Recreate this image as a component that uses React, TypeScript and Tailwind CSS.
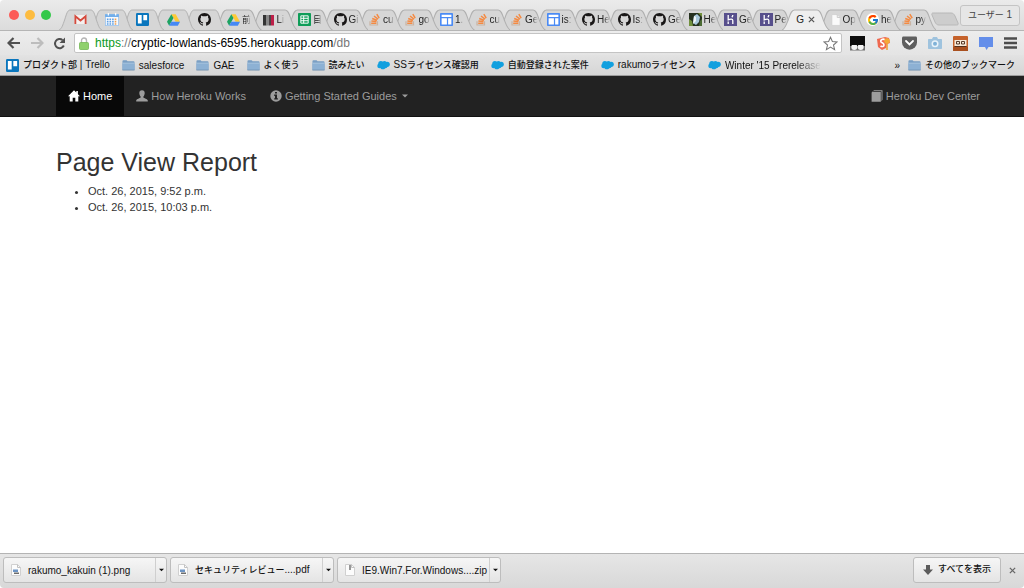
import type { ReactNode } from "react";
import { FcGoogle } from "react-icons/fc";

type IconProps = { className?: string };

function GithubIcon() {
  return (
    <svg viewBox="0 0 16 16" className="size-[13px] shrink-0" fill="#191717">
      <path d="M8 0C3.58 0 0 3.58 0 8c0 3.54 2.29 6.53 5.47 7.59.4.07.55-.17.55-.38 0-.19-.01-.82-.01-1.49-2.01.37-2.53-.49-2.69-.94-.09-.23-.48-.94-.82-1.13-.28-.15-.68-.52-.01-.53.63-.01 1.08.58 1.23.82.72 1.21 1.87.87 2.33.66.07-.52.28-.87.51-1.07-1.78-.2-3.64-.89-3.64-3.95 0-.87.31-1.59.82-2.15-.08-.2-.36-1.02.08-2.12 0 0 .67-.21 2.2.82.64-.18 1.32-.27 2-.27.68 0 1.36.09 2 .27 1.53-1.04 2.2-.82 2.2-.82.44 1.1.16 1.92.08 2.12.51.56.82 1.27.82 2.15 0 3.07-1.87 3.75-3.65 3.95.29.25.54.73.54 1.48 0 1.07-.01 1.93-.01 2.2 0 .21.15.46.55.38A8.01 8.01 0 0 0 16 8c0-4.42-3.58-8-8-8z" />
    </svg>
  );
}

function GmailIcon() {
  return (
    <svg viewBox="0 0 16 16" className="size-[13px]">
      <rect x="1" y="2.500" width="14" height="11" rx="1" fill="#f4f0ef" />
      <path d="M1.700 13.500V4l6.300 5.200L14.300 4v9.500" fill="none" stroke="#d54a3d" strokeWidth="2.200" />
    </svg>
  );
}

function CalendarIcon() {
  const days = [3.2, 6.4, 9.6, 12.8];
  return (
    <svg viewBox="0 0 17 16" className="h-[13px] w-[14px]">
      <rect x="0.500" y="2" width="16" height="13.500" fill="#f7fafe" stroke="#9cc4ee" />
      <path d="M0 1.500h17V5H0z" fill="#72aeea" />
      <path d="M4 0v3M13 0v3" stroke="#fff" strokeWidth="1.500" />
      {days.map((x) => <path key={x} d={`M${x} 6.700v2M${x} 9.600v2M${x} 12.500v2`} stroke={x === 12.8 ? "#f0a050" : "#5f9fe3"} strokeWidth="2" />)}
    </svg>
  );
}

function TrelloIcon() {
  return (
    <svg viewBox="0 0 16 16" className="size-[13px] shrink-0">
      <rect width="16" height="16" rx="1.500" fill="#0a76bd" />
      <path d="M2.300 2.500h4.700v10.500H2.300zM9 2.500h4.700v6.500H9z" fill="#fff" />
    </svg>
  );
}

function DriveIcon() {
  return (
    <svg viewBox="0 0 18 16" className="h-[12px] w-[13px] shrink-0">
      <path d="M6 0h6l6 10.500h-6z" fill="#fdc934" />
      <path d="M6 0l3 5.200L3 16 0 10.500z" fill="#1da362" />
      <path d="M6 10.500h12L15 16H3z" fill="#4688f4" />
    </svg>
  );
}

function SheetsIcon() {
  return (
    <svg viewBox="0 0 16 16" className="size-[13px] shrink-0">
      <rect width="16" height="16" rx="1" fill="#0f9d58" />
      <path d="M3.500 3.500h9v9h-9zM3.500 6.500h9M3.500 9.500h9M7 3.500v9" fill="none" stroke="#fff" strokeWidth="1.200" />
    </svg>
  );
}

function SitesIcon() {
  return (
    <svg viewBox="0 0 16 16" className="size-[13px] shrink-0">
      <rect width="16" height="16" rx="1" fill="#4a8af4" />
      <path d="M2 2h12v3H2zM2 6.500h6.500V14H2zM10 6.500h4V14h-4z" fill="#fff" />
    </svg>
  );
}

function StripesIcon() {
  return (
    <svg viewBox="0 0 12 12" className="size-[12px] shrink-0">
      <path d="M0 1h3.500v10.500H0z" fill="#333" />
      <path d="M3.500 1H6v10.500H3.500z" fill="#888" />
      <path d="M6 1h2v10.500H6z" fill="#4b4346" />
      <path d="M8 1h3v10.500H8z" fill="#bd1f48" />
    </svg>
  );
}

function PhotoIcon() {
  return (
    <svg viewBox="0 0 13 13" className="size-[13px] shrink-0">
      <rect width="13" height="13" fill="#25301f" />
      <path d="M0 6l3 2 1 5H0zM9 0h4v4z" fill="#71903c" />
      <path d="M5 3l3-2 3 3-1 5-3 3-3-2z" fill="#a9c9dc" />
      <path d="M5 3l2 1v4l-3 3z" fill="#f0f5f7" />
      <path d="M11 8l2-2v7h-3z" fill="#4b6b34" />
    </svg>
  );
}

function HerokuIcon() {
  return (
    <svg viewBox="0 0 13 13" className="size-[13px] shrink-0">
      <rect width="13" height="13" fill="#574f8c" />
      <path d="M4.200 2v4.800c2-.9 4.600-1.200 4.600.6V11M8.800 2c0 1-.4 1.700-1 2.300M4.200 8.500V11" fill="none" stroke="#fff" strokeWidth="1.300" />
    </svg>
  );
}

function PageIcon() {
  return (
    <svg viewBox="0 0 12 14" className="h-[12px] w-[10px] shrink-0">
      <path d="M1 .5h6.500L11 4v9.500H1z" fill="#fafafa" stroke="#cfcfcf" />
      <path d="M7.500.5V4H11" fill="none" stroke="#c4c4c4" />
    </svg>
  );
}

function StackIcon() {
  return (
    <svg viewBox="0 0 12 13" className="h-[13px] w-[12px] shrink-0" fill="none">
      <path d="M1 8.200v3.800h7.500V8.200" stroke="#c9b3a2" strokeWidth="1.200" />
      <path d="M2.200 10.300h5.200M2.400 8l5.100.6M3.200 5.500l4.800 1.800M5 3l4 3.100M7.800 1.200l2.400 4" stroke="#f48a42" strokeWidth="1.500" />
    </svg>
  );
}

function GoogleIcon() {
  return (
    <span className="flex size-[13px] shrink-0 items-center justify-center rounded-full bg-white">
      <FcGoogle className="size-[12px]" />
    </span>
  );
}

function FolderIcon() {
  return (
    <svg viewBox="0 0 14 12" className="h-[12px] w-[13px] shrink-0">
      <path d="M.5 2c0-.8.4-1.200 1-1.200h3.500l1 1.200h6.500c.6 0 1 .4 1 1V11.500H.5z" fill="#7a9fc4" />
      <path d="M.5 4h13v7.500H.5z" fill="#8db1d4" />
      <path d="M.5 4h13" stroke="#b8d0e6" strokeWidth=".8" />
      <path d="M.5 11.500h13" stroke="#6585a6" strokeWidth=".8" />
    </svg>
  );
}

function CloudIcon() {
  return (
    <svg viewBox="0 0 14 10" className="h-[10px] w-[13px] shrink-0" fill="#12a0df">
      <circle cx="4.200" cy="3.400" r="2.800" />
      <circle cx="8" cy="3" r="2.400" />
      <circle cx="11" cy="4.300" r="2.800" />
      <circle cx="2.800" cy="6" r="2.500" />
      <circle cx="6.300" cy="6.800" r="2.800" />
      <circle cx="9" cy="6.200" r="2.400" />
    </svg>
  );
}

// Japanese runs are set one size below the Latin text around them.
function Label({ text }: { text: string }) {
  return (
    <>
      {text.split(/([^\x00-\x7f]+)/).map((part, index) => (index % 2 === 1 ? <span className="text-[9px]" key={index}>{part}</span> : part))}
    </>
  );
}

type TabInfo = { icon?: ReactNode; title?: string; name: string; active?: boolean };

const pinnedTabs: TabInfo[] = [
  { icon: <GmailIcon />, name: "Gmail" },
  { icon: <CalendarIcon />, name: "Calendar" },
  { icon: <TrelloIcon />, name: "Trello" },
  { icon: <DriveIcon />, name: "Drive" },
  { icon: <GithubIcon />, name: "GitHub" },
];

const tabs: TabInfo[] = [
  { icon: <DriveIcon />, title: "前", name: "Drive" },
  { icon: <StripesIcon />, title: "Li", name: "List" },
  { icon: <SheetsIcon />, title: "目", name: "Sheets" },
  { icon: <GithubIcon />, title: "Gi", name: "GitHub" },
  { icon: <StackIcon />, title: "cu", name: "Stack Overflow" },
  { icon: <StackIcon />, title: "go", name: "Stack Overflow" },
  { icon: <SitesIcon />, title: "1.", name: "Sites" },
  { icon: <StackIcon />, title: "cu", name: "Stack Overflow" },
  { icon: <StackIcon />, title: "Ge", name: "Stack Overflow" },
  { icon: <SitesIcon />, title: "is:", name: "Sites" },
  { icon: <GithubIcon />, title: "He", name: "GitHub" },
  { icon: <GithubIcon />, title: "Is:", name: "GitHub" },
  { icon: <GithubIcon />, title: "Ge", name: "GitHub" },
  { icon: <PhotoIcon />, title: "He", name: "Blog" },
  { icon: <HerokuIcon />, title: "Ge", name: "Heroku" },
  { icon: <HerokuIcon />, title: "Pe", name: "Heroku" },
  { title: "G", name: "Getting Started", active: true },
  { icon: <PageIcon />, title: "Op", name: "Page" },
  { icon: <GoogleIcon />, title: "he", name: "Google" },
  { icon: <StackIcon />, title: "py", name: "Stack Overflow" },
];

function Tab({ tab, order, pinned }: { tab: TabInfo; order: number; pinned?: boolean }) {
  return (
    <li className={pinned ? "relative flex w-[31px] shrink-0" : "relative flex min-w-0 flex-1"} style={{ zIndex: tab.active ? 50 : order }}>
      <svg viewBox="0 0 46 21" preserveAspectRatio="none" className="absolute inset-y-0 -left-[6px] h-full w-[calc(100%+12px)]">
        <path d="M0 21C3 20 4 16 6 11 8 5 9 1 12 1H34C37 1 38 5 40 11 42 16 43 20 46 21z" fill={tab.active ? "#eeeeee" : "#d6d6d6"} />
        <path d="M0 21C3 20 4 16 6 11 8 5 9 1 12 1H34C37 1 38 5 40 11 42 16 43 20 46 21" fill="none" stroke="#b0b0b0" strokeWidth="1" />
      </svg>
      {tab.active ? (
        <div className="relative flex w-full items-center justify-center gap-1">
          <span>{tab.title}</span>
          <button aria-label="Close tab">
            <svg viewBox="0 0 8 8" className="size-[7px]"><path d="M1 1l6 6M7 1L1 7" stroke="#555" strokeWidth="1.400" /></svg>
          </button>
        </div>
      ) : (
        <button aria-label={tab.name} className={pinned ? "relative flex w-full items-center justify-center" : "relative flex w-full items-center gap-[2px] pl-[7px]"}>
          {tab.icon}
          {!pinned && <span className="whitespace-nowrap text-left [mask-image:linear-gradient(to_right,black_50%,transparent)]"><Label text={tab.title ?? ""} /></span>}
        </button>
      )}
    </li>
  );
}

function TabStrip() {
  return (
    <div className="flex h-[30px] items-end bg-linear-to-b from-[#ebebeb] to-[#dcdcdc]">
      <div className="flex w-[65px] shrink-0 gap-[6px] self-center pl-[9px]">
        <button aria-label="Close" className="size-[10px] rounded-full bg-[#fc5b57]" />
        <button aria-label="Minimize" className="size-[10px] rounded-full bg-[#fdbc40]" />
        <button aria-label="Zoom" className="size-[10px] rounded-full bg-[#34c84a]" />
      </div>
      <ul className="relative isolate flex h-[21px] min-w-0 flex-1 text-[10px] text-[#222]">
        {pinnedTabs.map((tab, index) => <Tab key={index} tab={tab} order={40 - index} pinned />)}
        {tabs.map((tab, index) => <Tab key={index} tab={tab} order={30 - index} />)}
      </ul>
      <button aria-label="New tab" className="mb-[4px] h-[14px] w-[30px] shrink-0">
        <svg viewBox="0 0 30 14" className="h-[14px] w-[30px]">
          <path d="M3 1h18c2 0 3 1 4 3l3 7c.500 1.500 0 2-1.500 2H9C7 13 6 12 5 10L2 3c-.500-1.300 0-2 1-2z" fill="#cdcdcd" stroke="#b8b8b8" />
        </svg>
      </button>
      <button className="mr-1 h-[21px] w-[60px] shrink-0 self-center rounded-[3px] border border-[#c4c4c4] bg-[#e6e6e6] text-[10px] text-[#444]"><Label text="ユーザー 1" /></button>
    </div>
  );
}

function Extensions() {
  return (
    <div className="flex shrink-0 items-center gap-[11px] pr-[7px] pl-[8px]">
      <button aria-label="Panda">
        <svg viewBox="0 0 15 15" className="size-[15px]">
          <path d="M0 0h15v11H0z" fill="#0c0c0c" />
          <path d="M0 10h15v4.500H0z" fill="#6e6e6e" />
          <circle cx="4.300" cy="11" r="3" fill="#f4f4f4" />
          <circle cx="10.700" cy="11" r="3" fill="#f4f4f4" />
          <path d="M0 0h15v9H0z" fill="#0c0c0c" />
        </svg>
      </button>
      <button aria-label="Stylish">
        <svg viewBox="0 0 15 15" className="size-[15px]">
          <path d="M1 3l8-2 4 1 1 5-3 1-1 4-4 2-4-3z" fill="#ef6950" />
          <path d="M9 4C7 2 4 4 5 6c1 1 3 1 3 3 0 1.500-2 2-3.500 1" fill="none" stroke="#fff" strokeWidth="1.600" />
          <circle cx="11" cy="5" r="2.800" fill="#f4a937" />
          <path d="M11 7v7" stroke="#f0a03a" strokeWidth="1.600" />
        </svg>
      </button>
      <button aria-label="Pocket">
        <svg viewBox="0 0 15 14" className="h-[14px] w-[15px]">
          <path d="M1.500.5h12c1 0 1.500.6 1.500 1.500v4.500a7.500 7.200 0 0 1-15 0V2C0 1.100.6.500 1.500.5z" fill="#5f5f5f" />
          <path d="M4 5l3.500 3.500L11 5" fill="none" stroke="#fff" strokeWidth="1.800" strokeLinecap="round" />
        </svg>
      </button>
      <button aria-label="Capture">
        <svg viewBox="0 0 14 14" className="h-[14px] w-[14px]">
          <path d="M1 3h3l1-2h4l1 2h3c.600 0 1 .4 1 1v8c0 .6-.4 1-1 1H1c-.6 0-1-.4-1-1V4c0-.6.400-1 1-1z" fill="#9fc3de" />
          <circle cx="7" cy="7.800" r="3.500" fill="#e9f3fa" />
          <circle cx="7" cy="7.800" r="2" fill="#7fb2d8" />
        </svg>
      </button>
      <button aria-label="Reader">
        <svg viewBox="0 0 15 15" className="size-[15px]">
          <rect width="15" height="15" rx="1" fill="#c5622b" />
          <path d="M0 11h15v4H0z" fill="#a9501f" />
          <path d="M1.500 4h12v6h-12z" fill="#f6ead9" />
          <path d="M3.500 5.500h3V8h-3zM8.500 5.500h3V8h-3zM1.500 10.500h12" fill="none" stroke="#4a2a1a" strokeWidth=".9" />
        </svg>
      </button>
      <button aria-label="Chat">
        <svg viewBox="0 0 14 13" className="h-[13px] w-[14px]"><path d="M0 0h14v10H9.500L7.500 13 6 10H0z" fill="#648eea" /></svg>
      </button>
      <button aria-label="Menu">
        <svg viewBox="0 0 13 12" className="h-[12px] w-[13px]"><path d="M0 1.500h13M0 6h13M0 10.500h13" stroke="#4d4d4d" strokeWidth="2.400" /></svg>
      </button>
    </div>
  );
}

function Toolbar() {
  return (
    <div className="flex h-[25px] items-center border-t border-[#b5b5b5] bg-linear-to-b from-[#ededed] to-[#e4e4e4]">
      <div className="flex w-[74px] shrink-0 items-center gap-[9px] pl-[7px]">
        <button aria-label="Back">
          <svg viewBox="0 0 14 12" className="h-[12px] w-[14px]"><path d="M13 6H2M6.500 1L1.500 6l5 5" fill="none" stroke="#505050" strokeWidth="2.200" /></svg>
        </button>
        <button aria-label="Forward">
          <svg viewBox="0 0 14 12" className="h-[12px] w-[14px]"><path d="M1 6h11M7.500 1l5 5-5 5" fill="none" stroke="#bdbdbd" strokeWidth="2.200" /></svg>
        </button>
        <button aria-label="Reload">
          <svg viewBox="0 0 13 13" className="size-[13px]">
            <path d="M10.800 8.500A4.600 4.600 0 1 1 9.500 3" fill="none" stroke="#505050" strokeWidth="2" />
            <path d="M12 .5V6H6.500z" fill="#505050" />
          </svg>
        </button>
      </div>
      <div className="flex h-[20px] min-w-0 flex-1 items-center rounded-[2px] border border-[#c4c4c4] bg-white pr-[3px] pl-[4px]">
        <svg viewBox="0 0 10 13" className="h-[13px] w-[10px] shrink-0">
          <path d="M2.500 6V3.500a2.500 2.500 0 0 1 5 0V6" fill="none" stroke="#b5b5b5" strokeWidth="1.400" />
          <rect x=".5" y="5.500" width="9" height="7" rx="1" fill="#8fd06d" stroke="#74b755" strokeWidth=".8" />
        </svg>
        <span className="flex-1 truncate pl-[6px] text-[12px] text-[#777]"><span className="text-[#0b9a1c]">https</span>://<span className="text-black">cryptic-lowlands-6595.herokuapp.com</span>/db</span>
        <button aria-label="Bookmark this page">
          <svg viewBox="0 0 16 16" className="size-[15px]"><path d="M8 1.300l2 4.600 5 .4-3.800 3.300 1.200 4.900L8 11.900l-4.400 2.600 1.200-4.900L1 6.300l5-.4z" fill="#fff" stroke="#777" strokeWidth="1.100" /></svg>
        </button>
      </div>
      <Extensions />
    </div>
  );
}

const bookmarks: { icon: ReactNode; title: string }[] = [
  { icon: <TrelloIcon />, title: "プロダクト部 | Trello" },
  { icon: <FolderIcon />, title: "salesforce" },
  { icon: <FolderIcon />, title: "GAE" },
  { icon: <FolderIcon />, title: "よく使う" },
  { icon: <FolderIcon />, title: "読みたい" },
  { icon: <CloudIcon />, title: "SSライセンス確認用" },
  { icon: <CloudIcon />, title: "自動登録された案件" },
  { icon: <CloudIcon />, title: "rakumoライセンス" },
];

function BookmarksBar() {
  return (
    <nav aria-label="Bookmarks" className="flex h-[21px] items-center gap-[12px] border-b border-[#9c9c9c] bg-linear-to-b from-[#e2e2e2] to-[#d6d6d6] pr-[9px] pl-[6px] text-[10px] font-medium whitespace-nowrap text-[#111]">
      {bookmarks.map((item) => (
        <a href="#" className="flex shrink-0 items-center gap-1" key={item.title}>{item.icon}<span><Label text={item.title} /></span></a>
      ))}
      <a href="#" className="flex shrink-0 items-center gap-1"><CloudIcon /><span className="[mask-image:linear-gradient(to_right,black_75%,transparent)]">Winter '15 Prerelease</span></a>
      <button aria-label="More bookmarks" className="ml-auto">»</button>
      <a href="#" className="-ml-1 flex shrink-0 items-center gap-1"><FolderIcon /><span><Label text="その他のブックマーク" /></span></a>
    </nav>
  );
}

function HomeGlyph() {
  return <svg viewBox="0 0 12 12" className="size-[12px]" fill="currentColor"><path d="M6 .3L0 6.300h1.700V11.500h3V7.800h2.600v3.700h3V6.300H12L9.900 4.200V1H8.300v1.600z" /></svg>;
}

function UserGlyph() {
  return <svg viewBox="0 0 12 12" className="size-[12px]" fill="currentColor"><path d="M6 .2c1.800 0 2.800 1.200 2.700 3C8.600 4.800 8 5.800 7.400 6.400v1c.4.800 4.200 1.300 4.400 3.100v1H.2v-1c.2-1.800 4-2.300 4.400-3.100v-1C4 5.800 3.400 4.800 3.300 3.200 3.200 1.400 4.200.2 6 .2z" /></svg>;
}

function InfoGlyph() {
  return <svg viewBox="0 0 12 12" className="size-[12px]" fill="currentColor"><path fillRule="evenodd" d="M6 .3a5.700 5.700 0 1 0 0 11.400A5.700 5.700 0 0 0 6 .3zM5 1.900h2v1.700H5zM4.200 4.600H7v3.700h.9v1.300H4.200V8.300H5V5.900h-.8z" /></svg>;
}

function BookGlyph() {
  return <svg viewBox="0 0 12 12" className="size-[12px]" fill="currentColor"><path d="M3 .3h8.500v9.400l-1 1.500V1.300H2.300L1.800 2h8v9.700H.6V2.600z" /></svg>;
}

function NavLink({ children, active }: { children: ReactNode; active?: boolean }) {
  return (
    <a href="#" className={active ? "flex items-center gap-[3px] bg-[#080808] px-3 text-white" : "flex items-center gap-[3px] px-3 hover:text-white"}>{children}</a>
  );
}

function Caret({ className }: IconProps) {
  return <svg viewBox="0 0 6 4" className={className} fill="currentColor"><path d="M0 .5h6L3 3.500z" /></svg>;
}

function Site() {
  return (
    <div className="flex-1 bg-white text-[#333]">
      <nav aria-label="Site" className="flex h-[41px] border-b border-[#111] bg-[#222] pr-8 pl-14 text-[11px] text-[#9d9d9d]">
        <NavLink active><HomeGlyph />Home</NavLink>
        <NavLink><UserGlyph />How Heroku Works</NavLink>
        <NavLink><InfoGlyph />Getting Started Guides<Caret className="ml-[2px] h-[4px] w-[6px]" /></NavLink>
        <div className="ml-auto flex"><NavLink><BookGlyph />Heroku Dev Center</NavLink></div>
      </nav>
      <main className="px-14 pt-[31px]">
        <h2 className="text-[25px] leading-[28px] font-medium">Page View Report</h2>
        <ul className="mt-[7px] list-disc pl-8 text-[11px] leading-4">
          <li>Oct. 26, 2015, 9:52 p.m.</li>
          <li>Oct. 26, 2015, 10:03 p.m.</li>
        </ul>
      </main>
    </div>
  );
}

function FileIcon({ zip }: { zip?: boolean }) {
  return (
    <svg viewBox="0 0 10 12" className="h-[12px] w-[10px] shrink-0">
      <path d="M.5.5h6l3 3v8h-9z" fill="#fcfcfc" stroke="#d0d0d0" />
      <path d="M6.500.5v3h3" fill="none" stroke="#c2c2c2" />
      {zip ? <path d="M5 1v5" stroke="#7c7c7c" strokeWidth="1.600" /> : <><path d="M2 5.500h5v2.500H2z" fill="#6c94c4" /><path d="M3 8.500h5v1.500H3z" fill="#6b6b6b" /></>}
    </svg>
  );
}

const downloads = [
  { title: "rakumo_kakuin (1).png" },
  { title: "セキュリティレビュー....pdf" },
  { title: "IE9.Win7.For.Windows....zip", zip: true },
];

function DownloadShelf() {
  return (
    <footer className="flex h-[35px] items-center gap-[3px] border-t border-[#b4b4b4] bg-linear-to-b from-[#e6e6e6] to-[#d8d8d8] pr-[8px] pb-[2px] pl-[3px] text-[10px] font-medium text-[#111]">
      {downloads.map((item) => (
        <div className="flex h-[26px] w-[164px] rounded-[3px] border border-[#bdbdbd] bg-linear-to-b from-[#f6f6f6] to-[#e4e4e4]" key={item.title}>
          <button className="flex min-w-0 flex-1 items-center gap-[7px] pl-[7px] whitespace-nowrap"><FileIcon zip={item.zip} /><span><Label text={item.title} /></span></button>
          <button aria-label="Download options" className="flex w-[11px] shrink-0 items-center justify-center border-l border-[#cfcfcf]"><Caret className="h-[4px] w-[5px]" /></button>
        </div>
      ))}
      <button className="ml-auto flex h-[26px] w-[88px] items-center justify-center gap-[5px] rounded-[3px] border border-[#bdbdbd] bg-linear-to-b from-[#f6f6f6] to-[#e4e4e4]">
        <svg viewBox="0 0 10 10" className="size-[10px]" fill="#5c5c5c"><path d="M3 0h4v4.500h3L5 10 0 4.500h3z" /></svg>
        <Label text="すべてを表示" />
      </button>
      <button aria-label="Close downloads bar" className="ml-[5px]">
        <svg viewBox="0 0 8 8" className="size-[7px]"><path d="M1 1l6 6M7 1L1 7" stroke="#666" strokeWidth="1.500" /></svg>
      </button>
    </footer>
  );
}

export default function App() {
  return (
    <div className="flex min-h-screen flex-col overflow-hidden rounded-[4px] font-['Liberation_Sans','Noto_Sans_CJK_JP',sans-serif] antialiased">
      <TabStrip />
      <Toolbar />
      <BookmarksBar />
      <Site />
      <DownloadShelf />
    </div>
  );
}
